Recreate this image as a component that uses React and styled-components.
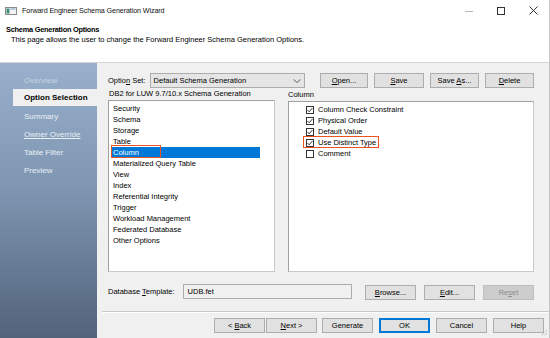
import React from "react";
import styled, { createGlobalStyle, css } from "styled-components";

const Global = createGlobalStyle`
  html, body { margin: 0; padding: 0; background: #ffffff; }
  body { font-family: "Liberation Sans", Arial, sans-serif; font-size: 7.5px; color: #000; }
  * { box-sizing: border-box; }
`;

const Window = styled.div`
  width: 550px;
  height: 338px;
  display: flex;
  flex-direction: column;
  background: #ffffff;
  position: relative;
  overflow: hidden;
  border-right: 1px solid #c8c8c8;
`;

const TitleBar = styled.div`
  height: 21px;
  display: flex;
  align-items: center;
  padding-left: 5px;
  font-size: 7.2px;
  letter-spacing: -0.12px;
  color: #111;
`;

const TitleText = styled.span`
  margin-left: 5px;
  flex: 1;
`;

const WinControls = styled.div`
  display: flex;
  align-items: center;
  height: 100%;
`;

const WinButton = styled.div`
  width: 32px;
  height: 100%;
  display: flex;
  align-items: center;
  justify-content: center;
`;

const Header = styled.div`
  height: 42px;
  padding: 3px 0 0 6px;
  border-bottom: 1px solid #d4d4d4;
`;

const HeaderTitle = styled.div`
  font-weight: bold;
  font-size: 7.4px;
  letter-spacing: -0.25px;
  line-height: 11px;
`;

const HeaderSub = styled.div`
  padding-left: 5px;
  font-size: 7.5px;
  line-height: 10px;
`;

const Body = styled.div`
  flex: 1;
  display: flex;
  min-height: 0;
`;

const Sidebar = styled.div`
  width: 97px;
  background: linear-gradient(180deg, #98b0cc 0%, #7f96b2 45%, #52637a 100%);
  padding-top: 8px;
  display: flex;
  flex-direction: column;
`;

const NavItem = styled.div`
  height: 18px;
  display: flex;
  align-items: center;
  padding-left: 24px;
  font-size: 8px;
  color: ${(p) => (p.$dim ? "#c9d5e3" : "#e9eef5")};
  ${(p) => p.$link && css`text-decoration: underline;`}
  ${(p) =>
    p.$active &&
    css`
      margin-left: 13px;
      padding-left: 11px;
      background: #f0f0f0;
      color: #000;
      font-weight: bold;
      height: 17px;
      margin-bottom: 1px;
    `}
`;

const Main = styled.div`
  flex: 1;
  background: #f0f0f0;
  display: flex;
  flex-direction: column;
  padding: 10px 0 0 0;
  position: relative;
`;

const Inner = styled.div`
  padding: 0 15px 0 11px;
  display: flex;
  flex-direction: column;
`;

const OptionRow = styled.div`
  display: flex;
  align-items: center;
  height: 15px;
`;

const Label = styled.span`
  white-space: nowrap;
`;

const U = styled.span`
  text-decoration: underline;
`;

const Combo = styled.div`
  margin-left: 4px;
  width: 155px;
  height: 15px;
  background: #e5e5e5;
  border: 1px solid #acacac;
  display: flex;
  align-items: center;
  padding-left: 3px;
`;

const ComboText = styled.span`
  flex: 1;
`;

const ButtonGroup = styled.div`
  margin-left: auto;
  display: flex;
  gap: 6px;
`;

const Button = styled.div`
  width: ${(p) => p.$w || 49}px;
  height: 15px;
  flex-shrink: 0;
  background: ${(p) => (p.$disabled ? "#cccccc" : "#e1e1e1")};
  border: 1px solid ${(p) => (p.$default ? "#0078d7" : p.$disabled ? "#bfbfbf" : "#adadad")};
  ${(p) => p.$default && css`box-shadow: inset 0 0 0 1px #0078d7;`}
  color: ${(p) => (p.$disabled ? "#8d8d8d" : "#000")};
  display: flex;
  align-items: center;
  justify-content: center;
`;

const Lists = styled.div`
  display: flex;
  gap: 13px;
`;

const ListColumn = styled.div`
  width: ${(p) => p.$w}px;
  display: flex;
  flex-direction: column;
`;

const Caption = styled.div`
  height: 12px;
  line-height: 12px;
  padding-left: ${(p) => p.$pl || 0}px;
  margin-top: ${(p) => p.$mt || 0}px;
`;

const ListBox = styled.div`
  height: ${(p) => p.$h || 172}px;
  background: #ffffff;
  border: 1px solid #a0a0a0;
  border-right-color: #c8c8c8;
  border-bottom-color: #c8c8c8;
  padding: 2px 0 0 2px;
  display: flex;
  flex-direction: column;
`;

const ListItem = styled.div`
  position: relative;
  width: 149px;
  height: 11px;
  line-height: 11px;
  padding-left: 2px;
  ${(p) =>
    p.$selected &&
    css`
      background: #0078d7;
      color: #ffffff;
    `}
`;

const Highlight = styled.div`
  position: absolute;
  left: ${(p) => p.$l}px;
  top: ${(p) => p.$t}px;
  width: ${(p) => p.$w}px;
  height: ${(p) => p.$h}px;
  border: 1.5px solid #e8531f;
  pointer-events: none;
`;

const CheckRow = styled.div`
  position: relative;
  display: flex;
  align-items: center;
  height: 11px;
  padding-left: 15px;
`;

const Box = styled.span`
  width: 8px;
  height: 8px;
  border: 1px solid #333333;
  background: #fff;
  margin-right: 4px;
  display: flex;
  align-items: center;
  justify-content: center;
`;

const TemplateRow = styled.div`
  display: flex;
  align-items: center;
  margin-top: 11px;
  height: 16px;
`;

const TextBox = styled.div`
  margin-left: 8px;
  width: 169px;
  height: 15px;
  background: #f0f0f0;
  border: 1px solid #adadad;
  display: flex;
  align-items: center;
  padding-left: 4px;
`;

const TemplateButtons = styled.div`
  margin-left: auto;
  display: flex;
  gap: 8px;
  margin-top: 2px;
`;

const Separator = styled.div`
  margin: 12px 0 0 5px;
  height: 2px;
  border-top: 1px solid #c9c9c9;
  border-bottom: 1px solid #ffffff;
`;

const Footer = styled.div`
  display: flex;
  justify-content: flex-end;
  gap: 6px;
  padding: 5px 5px 0 0;
`;

const NavPair = styled.div`
  display: flex;
  gap: 1px;
  margin-right: -1px;
`;

const Grip = styled.svg`
  position: absolute;
  right: 1px;
  bottom: 1px;
`;

const Check = () => (
  <svg width="6" height="6" viewBox="0 0 6 6">
    <path d="M0.5 3 L2.2 4.8 L5.5 0.9" fill="none" stroke="#222" strokeWidth="0.9" />
  </svg>
);

const leftItems = [
  "Security",
  "Schema",
  "Storage",
  "Table",
  "Column",
  "Materialized Query Table",
  "View",
  "Index",
  "Referential Integrity",
  "Trigger",
  "Workload Management",
  "Federated Database",
  "Other Options",
];

const checks = [
  ["Column Check Constraint", true],
  ["Physical Order", true],
  ["Default Value", true],
  ["Use Distinct Type", true],
  ["Comment", false],
];

export default function App() {
  return (
    <>
      <Global />
      <Window>
        <TitleBar>
          <svg width="12" height="8" viewBox="0 0 12 8">
            <rect x="0.5" y="0.5" width="11" height="7" fill="#f4f4f4" stroke="#8a8a8a" />
            <rect x="1.5" y="1.5" width="3" height="5" fill="#3e8f7c" />
            <rect x="5.5" y="1.5" width="5" height="1" fill="#7aa0c8" />
          </svg>
          <TitleText>Forward Engineer Schema Generation Wizard</TitleText>
          <WinControls>
            <WinButton>
              <svg width="8" height="8" viewBox="0 0 8 8">
                <line x1="0" y1="4.5" x2="8" y2="4.5" stroke="#b5b5b5" strokeWidth="1" />
              </svg>
            </WinButton>
            <WinButton>
              <svg width="8" height="8" viewBox="0 0 8 8">
                <rect x="0.5" y="0.5" width="7" height="7" fill="none" stroke="#333" strokeWidth="1" />
              </svg>
            </WinButton>
            <WinButton>
              <svg width="9" height="9" viewBox="0 0 9 9">
                <path d="M0.5 0.5 L8.5 8.5 M8.5 0.5 L0.5 8.5" stroke="#333" strokeWidth="1" />
              </svg>
            </WinButton>
          </WinControls>
        </TitleBar>
        <Header>
          <HeaderTitle>Schema Generation Options</HeaderTitle>
          <HeaderSub>
            This page allows the user to change the Forward Engineer Schema Generation Options.
          </HeaderSub>
        </Header>
        <Body>
          <Sidebar>
            <NavItem $dim>Overview</NavItem>
            <NavItem $active>Option Selection</NavItem>
            <NavItem>Summary</NavItem>
            <NavItem $link>Owner Override</NavItem>
            <NavItem>Table Filter</NavItem>
            <NavItem>Preview</NavItem>
          </Sidebar>
          <Main>
            <Inner>
              <OptionRow>
                <Label>
                  Optio<U>n</U> Set:
                </Label>
                <Combo>
                  <ComboText>Default Schema Generation</ComboText>
                  <svg width="14" height="8" viewBox="0 0 14 8">
                    <path d="M3.5 2.5 L7 5.5 L10.5 2.5" fill="none" stroke="#555" strokeWidth="0.9" />
                  </svg>
                </Combo>
                <ButtonGroup>
                  <Button $w={48}>
                    <span>
                      <U>O</U>pen...
                    </span>
                  </Button>
                  <Button $w={50}>
                    <span>
                      <U>S</U>ave
                    </span>
                  </Button>
                  <Button $w={49}>
                    <span>
                      Save <U>A</U>s...
                    </span>
                  </Button>
                  <Button $w={49}>
                    <span>
                      <U>D</U>elete
                    </span>
                  </Button>
                </ButtonGroup>
              </OptionRow>
              <Lists>
                <ListColumn $w={167}>
                  <Caption $pl={1}>DB2 for LUW 9.7/10.x Schema Generation</Caption>
                  <ListBox>
                    {leftItems.map((t) => (
                      <ListItem key={t} $selected={t === "Column"}>
                        {t}
                        {t === "Column" && <Highlight $l={0} $t={-2} $w={50} $h={13} />}
                      </ListItem>
                    ))}
                  </ListBox>
                </ListColumn>
                <ListColumn $w={246}>
                  <Caption $mt={1}>Column</Caption>
                  <ListBox $h={171}>
                    {checks.map(([t, c]) => (
                      <CheckRow key={t}>
                        <Box>{c && <Check />}</Box>
                        {t}
                        {t === "Use Distinct Type" && <Highlight $l={12} $t={-1} $w={76} $h={12} />}
                      </CheckRow>
                    ))}
                  </ListBox>
                </ListColumn>
              </Lists>
              <TemplateRow>
                <Label>
                  Database <U>T</U>emplate:
                </Label>
                <TextBox>UDB.fet</TextBox>
                <TemplateButtons>
                  <Button $w={51}>
                    <span>
                      <U>B</U>rowse...
                    </span>
                  </Button>
                  <Button $w={51}>
                    <span>
                      <U>E</U>dit...
                    </span>
                  </Button>
                  <Button $w={51} $disabled>
                    <span>
                      Re<U>s</U>et
                    </span>
                  </Button>
                </TemplateButtons>
              </TemplateRow>
            </Inner>
            <Separator />
            <Footer>
              <NavPair>
                <Button $w={51}>
                  <span>
                    &lt; <U>B</U>ack
                  </span>
                </Button>
                <Button $w={51}>
                  <span>
                    <U>N</U>ext &gt;
                  </span>
                </Button>
              </NavPair>
              <Button $w={51}>Generate</Button>
              <Button $w={51} $default>
                OK
              </Button>
              <Button $w={51}>Cancel</Button>
              <Button $w={51}>Help</Button>
            </Footer>
            <Grip width="10" height="10" viewBox="0 0 10 10">
              <path d="M9 3 L3 9 M9 6 L6 9" stroke="#a8a8a8" strokeWidth="1" strokeDasharray="1 1" />
            </Grip>
          </Main>
        </Body>
      </Window>
    </>
  );
}
